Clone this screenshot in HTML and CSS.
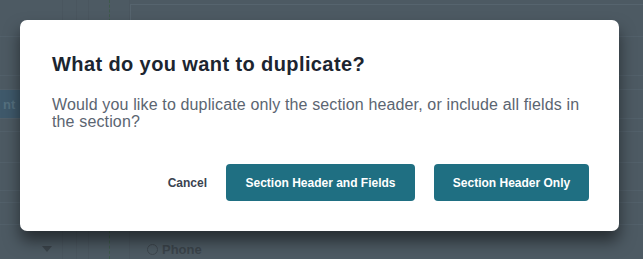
FILE: index.html
```html
<!DOCTYPE html>
<html>
<head>
<meta charset="utf-8">
<link rel="stylesheet" href="styles.css">
</head>
<body>
<div class="page">
  <div class="row h37 top"><div class="c c1"></div><div class="c c2"></div><div class="c c3"></div><div class="c c4"></div><div class="c c5"></div><div class="c c6"><div class="box"></div></div></div>
  <div class="row h39"><div class="c c1"></div><div class="c c2"></div><div class="c c3"></div><div class="c c4"></div><div class="c c5"></div><div class="c c6"></div></div>
  <div class="row h14"><div class="c c1"></div><div class="c c2"></div><div class="c c3"></div><div class="c c4"></div><div class="c c5"></div><div class="c c6"></div></div>
  <div class="row h29"><div class="c c1 hl"><span class="hltext">nt</span></div><div class="c c2"></div><div class="c c3"></div><div class="c c4"></div><div class="c c5"></div><div class="c c6"></div></div>
  <div class="row h13"><div class="c c1"></div><div class="c c2"></div><div class="c c3"></div><div class="c c4"></div><div class="c c5"></div><div class="c c6"></div></div>
  <div class="row h31"><div class="c c1"></div><div class="c c2"></div><div class="c c3"></div><div class="c c4"></div><div class="c c5"></div><div class="c c6"></div></div>
  <div class="row h28"><div class="c c1"></div><div class="c c2"></div><div class="c c3"></div><div class="c c4"></div><div class="c c5"></div><div class="c c6"></div></div>
  <div class="row h12"><div class="c c1"></div><div class="c c2"></div><div class="c c3"></div><div class="c c4"></div><div class="c c5"></div><div class="c c6"></div></div>
  <div class="row h22"><div class="c c1"></div><div class="c c2"></div><div class="c c3"></div><div class="c c4"></div><div class="c c5"></div><div class="c c6"></div></div>
  <div class="row h34 last"><div class="c c1 arrowcell"><span class="arrow"></span></div><div class="c c2"></div><div class="c c3"></div><div class="c c4"></div><div class="c c5"></div><div class="c c6 phonecell"><span class="radio"></span><span class="phone">Phone</span></div></div>
</div>

<div class="modal">
  <h1 class="title">What do you want to duplicate?</h1>
  <p class="desc">Would you like to duplicate only the section header, or include all fields in the section?</p>
  <div class="actions">
    <button class="cancel">Cancel</button>
    <button class="btn btn-wide">Section Header and Fields</button>
    <button class="btn btn-narrow">Section Header Only</button>
  </div>
</div>
</body>
</html>
```

FILE: styles.css
```css
html, body {
  margin: 0;
  padding: 0;
}
body {
  width: 643px;
  height: 259px;
  overflow: hidden;
  background: #4d5a63;
  font-family: "Liberation Sans", Arial, Helvetica, sans-serif;
  position: relative;
}
.page {
  display: flex;
  flex-direction: column;
  height: 259px;
  background: #4d5a63;
}
.row {
  display: grid;
  grid-template-columns: 63px 14px 12px 21px 20px 1fr;
  border-bottom: 1px solid #52606a;
  box-sizing: border-box;
}
.row.last { border-bottom: none; flex: 1; }
.h37 { height: 37px; }
.h39 { height: 39px; }
.h14 { height: 14px; }
.h29 { height: 29px; }
.h13 { height: 13px; }
.h31 { height: 31px; }
.h28 { height: 28px; }
.h12 { height: 12px; }
.h22 { height: 22px; }
.h34 { height: 34px; }
.c {
  border-right: 1px solid #4a565f;
  box-sizing: border-box;
}
.c4 { border-right: 1px dashed #3f5a4c; }
.c6 { border-right: none; }
.top .c6 { padding-top: 4px; }
.box {
  border-top: 1px solid #56646e;
  border-left: 1px solid #56646e;
  height: 100%;
  box-sizing: border-box;
}
.hl {
  background: #3f596b;
  display: flex;
  align-items: center;
  padding-left: 3px;
}
.hltext {
  color: #55707f;
  font-weight: bold;
  font-size: 13px;
}
.arrowcell {
  display: flex;
  align-items: flex-start;
  justify-content: flex-end;
  padding-right: 10px;
  padding-top: 21px;
}
.arrow {
  width: 0;
  height: 0;
  border-left: 5px solid transparent;
  border-right: 5px solid transparent;
  border-top: 6px solid #3b444b;
}
.phonecell {
  display: flex;
  align-items: flex-start;
  padding-left: 17px;
  padding-top: 17px;
  gap: 4px;
}
.radio {
  width: 9px;
  height: 9px;
  margin-top: 2px;
  border: 1px solid #3e474e;
  border-radius: 50%;
}
.phone {
  color: #3b444b;
  font-weight: bold;
  font-size: 13px;
  line-height: 15px;
}

.modal {
  position: absolute;
  left: 20px;
  top: 20px;
  width: 599px;
  height: 211px;
  box-sizing: border-box;
  background: #ffffff;
  border-radius: 7px;
  box-shadow: 0 10px 16px rgba(0, 0, 0, 0.5);
  padding: 32px 30px 30px 32px;
  display: flex;
  flex-direction: column;
}
.title {
  margin: 0;
  font-size: 20px;
  line-height: 24px;
  font-weight: bold;
  letter-spacing: 0.4px;
  color: #1c2530;
}
.desc {
  margin: 20px 0 0 0;
  font-size: 16px;
  line-height: 17px;
  letter-spacing: 0.14px;
  color: #5b6571;
}
.actions {
  margin-top: auto;
  display: flex;
  justify-content: flex-end;
  align-items: center;
  gap: 19px;
}
.cancel {
  background: none;
  border: none;
  padding: 0;
  font-family: inherit;
  font-size: 12px;
  font-weight: bold;
  color: #3a4350;
}
.btn {
  height: 37px;
  border: none;
  border-radius: 4px;
  background: #1f6f82;
  color: #ffffff;
  font-family: inherit;
  font-size: 12px;
  font-weight: bold;
  padding: 0;
}
.btn-wide { width: 189px; }
.btn-narrow { width: 155px; }
```
